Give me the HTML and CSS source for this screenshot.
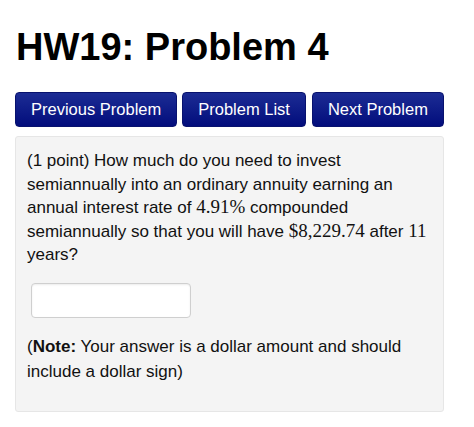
FILE: index.html
```html
<!DOCTYPE html>
<html lang="en">
<head>
<meta charset="utf-8">
<title>HW19: Problem 4</title>
<link rel="stylesheet" href="styles.css">
</head>
<body>
<div class="page">
  <h1 class="title">HW19: Problem 4</h1>
  <nav class="nav">
    <a class="btn" href="#">Previous Problem</a>
    <a class="btn" href="#">Problem List</a>
    <a class="btn" href="#">Next Problem</a>
  </nav>
  <div class="problem">
    <p class="text">(1 point) How much do you need to invest semiannually into an ordinary annuity earning an annual interest rate of <span class="math">4.91%</span> compounded semiannually so that you will have <span class="math">$8,229.74</span> after <span class="math">11</span> years?</p>
    <div class="answer"><input class="field" type="text" aria-label="answer"></div>
    <p class="note">(<b>Note:</b> Your answer is a dollar amount and should include a dollar sign)</p>
  </div>
</div>
</body>
</html>
```
FILE: styles.css
```css
html, body {
  margin: 0;
  padding: 0;
  background: #fff;
}
.page {
  padding: 0 0 0 15px;
  width: 429px;
  font-family: "Liberation Sans", Arial, sans-serif;
  color: #111;
}
.title {
  margin: 23px 0 0 1px;
  font-size: 38px;
  line-height: 48px;
  font-weight: bold;
  color: #000;
}
.nav {
  display: flex;
  gap: 5px;
  margin-top: 21px;
}
.btn {
  display: flex;
  align-items: center;
  height: 33px;
  padding: 0 15px;
  border: 1px solid #08126e;
  border-radius: 4px;
  background: linear-gradient(#1c2c94, #020d7c);
  color: #fff;
  font-size: 16.5px;
  text-decoration: none;
  white-space: nowrap;
}
.btn + .btn + .btn {
  margin-left: 1px;
}
.problem {
  margin-top: 9px;
  background: #f4f4f4;
  border: 1px solid #e6e6e6;
  border-radius: 3px;
  padding: 12px 11px 27px 11px;
}
.text, .note {
  margin: 0;
  font-size: 17px;
  line-height: 23.5px;
}
.note {
  margin-top: 17px;
  line-height: 24.5px;
}
.math {
  font-family: "Liberation Serif", "Times New Roman", serif;
  font-size: 19px;
  line-height: 1;
}
.answer {
  padding: 16.5px 0 0 4px;
}
.field {
  display: block;
  box-sizing: border-box;
  width: 160px;
  height: 35px;
  margin: 0;
  border: 1px solid #cfcfcf;
  border-radius: 4px;
  background: #fff;
  box-shadow: inset 0 1px 2px rgba(0,0,0,0.08);
}
```
